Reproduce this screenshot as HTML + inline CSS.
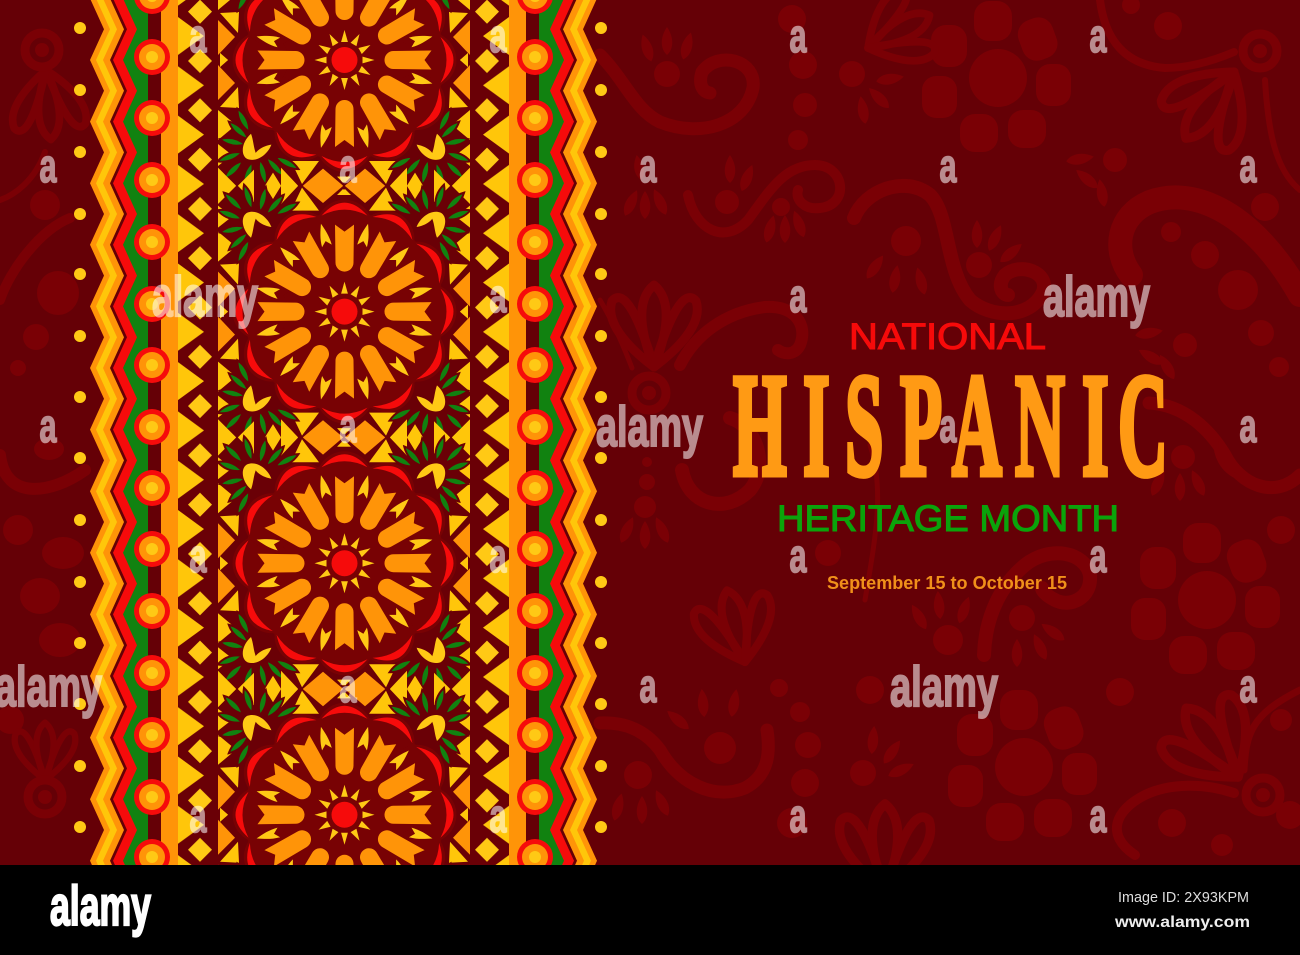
<!DOCTYPE html>
<html lang="en">
<head>
<meta charset="utf-8">
<title>National Hispanic Heritage Month</title>
<style>
html,body{margin:0;padding:0;background:#000;width:1300px;height:955px;overflow:hidden}
svg{display:block}
text{font-family:"Liberation Sans",sans-serif}
.wm text{font-weight:700;font-size:47px;fill:#fff;stroke:#fff;stroke-width:1.6}
.wm .b{font-size:57px;stroke-width:2}
</style>
</head>
<body>
<svg xmlns="http://www.w3.org/2000/svg" width="1300" height="955" viewBox="0 0 1300 955">
<defs>
<path id="z" d="M0,-1.6L14,29.2L0,60L14,90.8L0,121.6L14,152.4L0,183.2L14,214L0,244.8L14,275.6L0,306.4L14,337.2L0,368L14,398.8L0,429.6L14,460.4L0,491.2L14,522L0,552.8L14,583.6L0,614.4L14,645.2L0,676L14,706.8L0,737.6L14,768.4L0,799.2L14,830L0,860.8L14,891.6L100,891.6L100,-1.6Z"/>
<g id="ci"><circle r="18" fill="#f60b0b"/><circle r="13" fill="#ff9408"/><circle r="6" fill="#ffc915"/></g>
<pattern id="col" width="40" height="49.3" patternUnits="userSpaceOnUse" patternTransform="translate(178,17)">
<rect width="40" height="49.3" fill="#6a0006"/>
<path d="M0,0L26,19L0,38Z" fill="#ffc60a"/>
<path d="M22,32L34,44L22,56L10,44Z M22,-17.3L34,-5.3L22,6.7L10,-5.3Z" fill="#ffc915"/>
</pattern>
<g id="side">
<use href="#z" x="90" fill="#ff9408"/>
<use href="#z" x="96" fill="#ffc60a"/>
<use href="#z" x="103" fill="#ff9408"/>
<use href="#z" x="110" fill="#650006"/>
<use href="#z" x="113" fill="#f60b0b"/>
<use href="#z" x="123" fill="#118210"/>
<rect x="148" y="0" width="14" height="865" fill="#650006"/>
<rect x="161" y="0" width="18" height="865" fill="#ff9408"/>
<rect x="178" y="0" width="40" height="865" fill="url(#col)"/>
<use href="#ci" x="152" y="-4"/><use href="#ci" x="152" y="57"/><use href="#ci" x="152" y="118"/><use href="#ci" x="152" y="180"/><use href="#ci" x="152" y="242"/><use href="#ci" x="152" y="304"/><use href="#ci" x="152" y="365"/><use href="#ci" x="152" y="427"/><use href="#ci" x="152" y="488"/><use href="#ci" x="152" y="549"/><use href="#ci" x="152" y="611"/><use href="#ci" x="152" y="673"/><use href="#ci" x="152" y="735"/><use href="#ci" x="152" y="797"/><use href="#ci" x="152" y="857"/>
</g>
<g id="dots" fill="#ffc915"><circle cy="28" r="6"/><circle cy="90" r="6"/><circle cy="152" r="6"/><circle cy="214" r="6"/><circle cy="274" r="6"/><circle cy="336" r="6"/><circle cy="397" r="6"/><circle cy="458" r="6"/><circle cy="520" r="6"/><circle cy="582" r="6"/><circle cy="643" r="6"/><circle cy="704" r="6"/><circle cy="766" r="6"/><circle cy="827" r="6"/></g>
<path id="l" d="M0,-13Q7,0 0,13Q-7,0 0,-13Z" fill="#118210" stroke="#6a0006" stroke-width="2"/>
<g id="q">
<path d="M218,5L235,23L218,40Z M303,126L323,109L343,126L323,143Z" fill="#ff9408"/>
<path d="M220,-7L228,0L220,7Z M220,47L238,27L239,48Z M218,50L236,65L218,80Z M218,84L232,95L218,106Z M218,108L236,126L218,144Z M238,126L254,110L254,142Z M265,126L273,113L281,126L273,139Z M281,108L298,126L281,144Z M291,101L319,101L302,124Z M338,135L345,129L351,135Z" fill="#ffc60a"/>
<circle cx="257" cy="87" r="18" fill="#6a0006"/>
<use href="#l" transform="translate(257,87) rotate(-27) translate(0,-30)"/>
<use href="#l" transform="translate(257,87) rotate(-48) translate(0,-25)"/>
<use href="#l" transform="translate(257,87) rotate(-78) translate(0,-25)"/>
<use href="#l" transform="translate(257,87) rotate(-110) translate(0,-29)"/>
<use href="#l" transform="translate(257,87) rotate(-134) translate(0,-33)"/>
<use href="#l" transform="translate(257,87) rotate(-162) translate(0,-29)"/>
<use href="#l" transform="translate(257,87) rotate(167) translate(0,-26)"/>
<use href="#l" transform="translate(257,87) rotate(138) translate(0,-27)"/>
<use href="#l" transform="translate(257,87) rotate(118) translate(0,-34)"/>
<path transform="translate(257,87) scale(1.2)" d="M-5,-11C-13,-4 -14,7 -8,10C0,13 9,6 12,-2C5,-1 0,3 -1,5C-3,0 -3,-6 -5,-11Z" fill="#ffc915"/>
</g>
<g id="q4">
<use href="#q"/>
<use href="#q" transform="translate(688,0) scale(-1,1)"/>
<use href="#q" transform="scale(1,-1)"/>
<use href="#q" transform="translate(688,0) scale(-1,-1)"/>
</g>
<path id="pe" d="M-9,-49A9,9 0 0 0 9,-49L9.5,-87L0,-80L-9.5,-87Z" fill="#ff9408"/>
<path id="sp" d="M0,-91C2.500,-84 5,-77 5,-68L0,-73L-5,-68C-5,-77 -2.500,-84 0,-91Z" fill="#ffc915"/>
<path id="ray" d="M0,-30L3.4,-18L-3.4,-18Z" fill="#ffc915"/>
<path id="arc" d="M-23,-96Q0,-122 23,-96Q0,-108 -23,-96Z" fill="#f60b0b"/>
<g id="m">
<circle r="100" fill="#780204"/>
<g fill="#780204"><circle cx="0" cy="-84" r="28"/><circle cx="42" cy="-72.7" r="28"/><circle cx="72.7" cy="-42" r="28"/><circle cx="84" cy="0" r="28"/><circle cx="72.7" cy="42" r="28"/><circle cx="42" cy="72.7" r="28"/><circle cx="0" cy="84" r="28"/><circle cx="-42" cy="72.7" r="28"/><circle cx="-72.7" cy="42" r="28"/><circle cx="-84" cy="0" r="28"/><circle cx="-72.7" cy="-42" r="28"/><circle cx="-42" cy="-72.7" r="28"/></g>
<use href="#arc"/><use href="#arc" transform="rotate(30)"/><use href="#arc" transform="rotate(60)"/><use href="#arc" transform="rotate(90)"/><use href="#arc" transform="rotate(120)"/><use href="#arc" transform="rotate(150)"/><use href="#arc" transform="rotate(180)"/><use href="#arc" transform="rotate(210)"/><use href="#arc" transform="rotate(240)"/><use href="#arc" transform="rotate(270)"/><use href="#arc" transform="rotate(300)"/><use href="#arc" transform="rotate(330)"/>
<use href="#pe"/><use href="#pe" transform="rotate(30)"/><use href="#pe" transform="rotate(60)"/><use href="#pe" transform="rotate(90)"/><use href="#pe" transform="rotate(120)"/><use href="#pe" transform="rotate(150)"/><use href="#pe" transform="rotate(180)"/><use href="#pe" transform="rotate(210)"/><use href="#pe" transform="rotate(240)"/><use href="#pe" transform="rotate(270)"/><use href="#pe" transform="rotate(300)"/><use href="#pe" transform="rotate(330)"/>
<use href="#sp" transform="rotate(15)"/><use href="#sp" transform="rotate(45)"/><use href="#sp" transform="rotate(75)"/><use href="#sp" transform="rotate(105)"/><use href="#sp" transform="rotate(135)"/><use href="#sp" transform="rotate(165)"/><use href="#sp" transform="rotate(195)"/><use href="#sp" transform="rotate(225)"/><use href="#sp" transform="rotate(255)"/><use href="#sp" transform="rotate(285)"/><use href="#sp" transform="rotate(315)"/><use href="#sp" transform="rotate(345)"/>
<use href="#ray"/><use href="#ray" transform="rotate(30)"/><use href="#ray" transform="rotate(60)"/><use href="#ray" transform="rotate(90)"/><use href="#ray" transform="rotate(120)"/><use href="#ray" transform="rotate(150)"/><use href="#ray" transform="rotate(180)"/><use href="#ray" transform="rotate(210)"/><use href="#ray" transform="rotate(240)"/><use href="#ray" transform="rotate(270)"/><use href="#ray" transform="rotate(300)"/><use href="#ray" transform="rotate(330)"/>
<circle r="13" fill="#f60b0b"/>
</g>
<g id="sh" fill="none" stroke="#7a0005" stroke-width="9" stroke-linejoin="round">
<path d="M0,0C-20,-15 -50,-42 -42,-66C-30,-80 -15,-50 0,0Z"/>
<path d="M0,0C-12,-30 -20,-66 0,-82C20,-66 12,-30 0,0Z"/>
<path d="M0,0C20,-15 50,-42 42,-66C30,-80 15,-50 0,0Z"/>
</g>
<g id="ey"><circle r="17" fill="none" stroke="#7a0005" stroke-width="9"/><circle r="7" fill="#7a0005"/></g>
<path id="fi" d="M0,-14C7,-4 7,8 0,14C-7,8 -7,-4 0,-14Z" fill="#7a0005"/>
<g id="fl" fill="#7a0005">
<circle r="29"/>
<rect x="-24" y="-77" width="38" height="40" rx="15"/><rect x="22" y="-60" width="36" height="42" rx="15" transform="rotate(-20 40 -38)"/><rect x="38" y="-14" width="35" height="42" rx="14"/><rect x="10" y="32" width="38" height="38" rx="15"/><rect x="-38" y="36" width="38" height="38" rx="15"/><rect x="-76" y="-2" width="35" height="42" rx="14"/><rect x="-67" y="-53" width="36" height="42" rx="15"/>
</g>
</defs>

<rect width="1300" height="865" fill="#650006"/>

<!-- background motifs -->
<g fill="#7a0005">
<use href="#fl" x="998" y="78"/>
<use href="#fl" x="1024" y="767"/>
<use href="#fl" x="1207" y="600"/>
<circle cx="792" cy="19" r="14"/><circle cx="803" cy="65" r="14"/><circle cx="805" cy="105" r="12"/><circle cx="798" cy="140" r="10"/>
<circle cx="667" cy="74" r="13"/><use href="#fi" x="647" y="48" transform="rotate(-18 647 48)"/><use href="#fi" x="667" y="41"/><use href="#fi" x="687" y="46" transform="rotate(16 687 46)"/>
<circle cx="852" cy="74" r="13"/><use href="#fi" x="890" y="79" transform="rotate(80 890 79)"/><use href="#fi" x="879" y="98" transform="rotate(-45 879 98)"/><use href="#fi" x="863" y="110" transform="rotate(-10 863 110)"/>
<circle cx="727" cy="202" r="12"/><use href="#fi" x="712" y="172" transform="rotate(-10 712 172) scale(.9)"/><use href="#fi" x="730" y="169"/><use href="#fi" x="747" y="178" transform="rotate(22 747 178)"/>
<circle cx="781" cy="207" r="9"/><use href="#fi" x="770" y="229" transform="rotate(15 770 229)"/><use href="#fi" x="785" y="229"/><use href="#fi" x="799" y="224" transform="rotate(-20 799 224)"/>
<use href="#fi" x="631" y="203" transform="rotate(25 631 203)"/><use href="#fi" x="645" y="205"/><use href="#fi" x="660" y="202" transform="rotate(-25 660 202)"/>
<circle cx="906" cy="241" r="15"/><use href="#fi" x="875" y="267" transform="rotate(35 875 267)"/><use href="#fi" x="895" y="279" transform="rotate(10 895 279)"/><use href="#fi" x="921" y="281" transform="rotate(-15 921 281)"/>
<circle cx="979" cy="265" r="13"/><use href="#fi" x="977" y="234"/><use href="#fi" x="995" y="238" transform="rotate(25 995 238)"/><use href="#fi" x="1011" y="253" transform="rotate(50 1011 253)"/>
<circle cx="1115" cy="160" r="12"/><use href="#fi" x="1080" y="159" transform="rotate(80 1080 159)"/><use href="#fi" x="1087" y="179" transform="rotate(-50 1087 179)"/><use href="#fi" x="1102" y="193" transform="rotate(-10 1102 193)"/>
<circle cx="1168" cy="26" r="14"/><circle cx="1131" cy="5" r="9"/>
<circle cx="1265" cy="207" r="14"/><circle cx="1171" cy="232" r="10"/><circle cx="1205" cy="255" r="14"/><circle cx="1238" cy="290" r="20"/><circle cx="1261" cy="333" r="13"/><circle cx="1279" cy="367" r="10"/>
<circle cx="1185" cy="345" r="12"/><use href="#fi" x="1149" y="333" transform="rotate(80 1149 333)"/><use href="#fi" x="1151" y="357" transform="rotate(-60 1151 357)"/><use href="#fi" x="1167" y="367" transform="rotate(-30 1167 367)"/>
<circle cx="1183" cy="457" r="12"/><use href="#fi" x="1158" y="483" transform="rotate(25 1158 483)"/><use href="#fi" x="1180" y="487"/><use href="#fi" x="1198" y="483" transform="rotate(-25 1198 483)"/>
<circle cx="948" cy="640" r="15"/><use href="#fi" x="919" y="617" transform="rotate(-30 919 617)"/><use href="#fi" x="939" y="605" transform="rotate(-5 939 605)"/><use href="#fi" x="964" y="610" transform="rotate(20 964 610)"/>
<circle cx="1022" cy="618" r="13"/><use href="#fi" x="1017" y="653"/><use href="#fi" x="1040" y="647" transform="rotate(-25 1040 647)"/><use href="#fi" x="1053" y="632" transform="rotate(-55 1053 632)"/>
<circle cx="645" cy="507" r="11"/><use href="#fi" x="627" y="530" transform="rotate(25 627 530)"/><use href="#fi" x="645" y="535"/><use href="#fi" x="662" y="530" transform="rotate(-25 662 530)"/>
<circle cx="647" cy="482" r="8"/><circle cx="647" cy="462" r="5"/><circle cx="828" cy="553" r="13"/><circle cx="1281" cy="530" r="14"/>
<circle cx="720" cy="748" r="16"/><use href="#fi" x="678" y="720" transform="rotate(-50 678 720)"/><use href="#fi" x="703" y="703" transform="rotate(-5 703 703)"/><use href="#fi" x="734" y="703" transform="rotate(10 734 703)"/>
<circle cx="638" cy="775" r="14"/><use href="#fi" x="618" y="807" transform="rotate(15 618 807)"/><use href="#fi" x="642" y="810"/><use href="#fi" x="662" y="803" transform="rotate(-25 662 803)"/>
<circle cx="779" cy="688" r="9"/><circle cx="800" cy="712" r="10"/><circle cx="808" cy="745" r="13"/><circle cx="805" cy="783" r="14"/><circle cx="792" cy="823" r="15"/>
<circle cx="863" cy="773" r="13"/><use href="#fi" x="873" y="740" transform="rotate(5 873 740)"/><use href="#fi" x="892" y="752" transform="rotate(35 892 752)"/><use href="#fi" x="901" y="770" transform="rotate(65 901 770)"/>
<circle cx="870" cy="690" r="14"/><circle cx="1120" cy="692" r="14"/><circle cx="1172" cy="823" r="14"/><circle cx="1222" cy="845" r="11"/>
<circle cx="1281" cy="720" r="11"/><circle cx="1290" cy="815" r="14"/>
<!-- left edge -->
<circle cx="45" cy="205" r="15"/><ellipse cx="58" cy="293" rx="21" ry="22"/><circle cx="36" cy="337" r="13"/><circle cx="18" cy="368" r="8"/><ellipse cx="49" cy="449" rx="15" ry="11"/><circle cx="18" cy="530" r="15"/><ellipse cx="63" cy="553" rx="21" ry="16"/><ellipse cx="40" cy="596" rx="20" ry="18"/><ellipse cx="60" cy="640" rx="21" ry="17"/><circle cx="10" cy="720" r="14"/>
</g>
<g fill="none" stroke="#7a0005" stroke-linecap="round" stroke-linejoin="round">
<path d="M600,55C625,80 635,110 660,122C700,138 745,125 753,88C757,60 718,50 702,72C698,85 703,92 710,93" stroke-width="13"/>
<path d="M1100,0C1105,40 1125,65 1165,68C1190,68 1215,60 1234,52" stroke-width="8"/>
<path d="M688,195C695,230 725,245 748,220C770,190 785,165 815,165C845,165 850,205 820,208C805,210 795,200 798,190" stroke-width="10"/>
<path d="M854,218C865,190 905,175 930,195C950,215 945,270 970,300C990,318 1030,320 1043,292C1050,272 1020,262 1005,275C997,285 1002,295 1008,295" stroke-width="14"/>
<path d="M1265,80C1268,130 1275,170 1300,190" stroke-width="6"/>
<path d="M1131,275C1112,250 1118,215 1150,202C1195,185 1255,215 1300,295" stroke-width="24"/>
<path d="M680,365C695,335 725,312 765,307C795,305 808,325 800,345C795,355 785,355 778,350" stroke-width="12"/>
<path d="M600,300C615,325 625,350 632,368" stroke-width="5"/>
<path d="M682,470C688,505 725,515 750,490C770,465 755,425 730,418" stroke-width="14"/>
<path d="M1149,403C1185,405 1210,430 1225,455C1240,485 1275,500 1300,475" stroke-width="13"/>
<path d="M1216,440C1215,455 1222,470 1238,477" stroke-width="5"/>
<path d="M984,655C985,625 995,590 1025,565C1050,545 1085,552 1090,575C1092,598 1070,608 1055,600C1045,595 1042,590 1042,588" stroke-width="14"/>
<path d="M600,723C625,722 645,730 660,750C680,785 715,800 745,788C770,775 770,750 767,730" stroke-width="13"/>
<path d="M1234,793C1205,783 1170,783 1145,795C1115,810 1105,835 1135,855" stroke-width="10"/>
<path d="M1244,770C1246,735 1250,715 1300,690" stroke-width="7"/>
<path d="M870,445C885,490 875,540 865,600" stroke-width="5"/>
<path d="M0,200C15,195 35,180 45,152" stroke-width="6"/>
<path d="M0,300C10,270 40,230 70,218" stroke-width="10"/>
<path d="M0,455C5,500 50,495 85,470" stroke-width="12"/>
</g>
<use href="#sh" transform="translate(868,48) rotate(62) scale(.85)"/>
<use href="#sh" transform="translate(1234,72) rotate(-144)"/>
<use href="#sh" transform="translate(654,367)"/>
<use href="#sh" transform="translate(745,662) rotate(-14) scale(.9)"/>
<use href="#sh" transform="translate(1238,777) rotate(-37) scale(1.05)"/>
<use href="#sh" transform="translate(885,890) scale(1.05)"/>
<use href="#sh" transform="translate(46,70) rotate(176) scale(.85)"/>
<use href="#sh" transform="translate(45,780) scale(.7)"/>
<use href="#ey" x="1260" y="51"/>
<use href="#ey" x="649" y="393"/>
<use href="#ey" x="1263" y="795"/>
<use href="#ey" x="42" y="50"/>
<use href="#ey" x="45" y="797"/>

<!-- decorative strip -->
<use href="#side"/>
<use href="#side" transform="translate(687,0) scale(-1,1)"/>
<use href="#dots" x="80"/>
<use href="#dots" x="601"/>
<rect x="218" y="0" width="251" height="865" fill="#6a0006"/>
<use href="#q4" y="60"/>
<use href="#q4" y="311.6"/>
<use href="#q4" y="563.2"/>
<use href="#q4" y="814.8"/>
<use href="#m" x="344.500" y="60"/>
<use href="#m" x="344.500" y="311.6"/>
<use href="#m" x="344.500" y="563.2"/>
<use href="#m" x="344.500" y="814.8"/>

<!-- headline -->
<text x="849" y="349" font-size="37" fill="#f60a0a" stroke="#f60a0a" stroke-width="1.1" textLength="197" lengthAdjust="spacingAndGlyphs">NATIONAL</text>
<text transform="scale(.47,1)" x="1559.6 1708.5 1797.9 1914.9 2025.5 2159.6 2302 2378.7" y="474.500" font-size="147" font-weight="700" fill="#ff9a14" stroke="#ff9a14" stroke-width="6" style="font-family:'Liberation Serif',serif">HISPANIC</text>
<text x="777" y="531" font-size="37" fill="#0ba30b" stroke="#0ba30b" stroke-width="1.1" textLength="342" lengthAdjust="spacingAndGlyphs">HERITAGE MONTH</text>
<text x="827" y="589" font-size="18" font-weight="700" fill="#f0901a" textLength="240" lengthAdjust="spacingAndGlyphs">September 15 to October 15</text>

<!-- watermarks -->
<g class="wm" opacity=".55">
<text class="b" x="152" y="316" textLength="106" lengthAdjust="spacingAndGlyphs">alamy</text>
<text class="b" x="1043" y="316" textLength="107" lengthAdjust="spacingAndGlyphs">alamy</text>
<text class="b" x="596" y="446" textLength="107" lengthAdjust="spacingAndGlyphs">alamy</text>
<text class="b" x="-5" y="706" textLength="107" lengthAdjust="spacingAndGlyphs">alamy</text>
<text class="b" x="890" y="706" textLength="108" lengthAdjust="spacingAndGlyphs">alamy</text>
<text x="189.500" y="52" textLength="17" lengthAdjust="spacingAndGlyphs">a</text>
<text x="489.500" y="52" textLength="17" lengthAdjust="spacingAndGlyphs">a</text>
<text x="789.500" y="52" textLength="17" lengthAdjust="spacingAndGlyphs">a</text>
<text x="1089.500" y="52" textLength="17" lengthAdjust="spacingAndGlyphs">a</text>
<text x="39.500" y="182" textLength="17" lengthAdjust="spacingAndGlyphs">a</text>
<text x="339.500" y="182" textLength="17" lengthAdjust="spacingAndGlyphs">a</text>
<text x="639.500" y="182" textLength="17" lengthAdjust="spacingAndGlyphs">a</text>
<text x="939.500" y="182" textLength="17" lengthAdjust="spacingAndGlyphs">a</text>
<text x="1239.500" y="182" textLength="17" lengthAdjust="spacingAndGlyphs">a</text>
<text x="489.500" y="312" textLength="17" lengthAdjust="spacingAndGlyphs">a</text>
<text x="789.500" y="312" textLength="17" lengthAdjust="spacingAndGlyphs">a</text>
<text x="39.500" y="442" textLength="17" lengthAdjust="spacingAndGlyphs">a</text>
<text x="339.500" y="442" textLength="17" lengthAdjust="spacingAndGlyphs">a</text>
<text x="939.500" y="442" textLength="17" lengthAdjust="spacingAndGlyphs">a</text>
<text x="1239.500" y="442" textLength="17" lengthAdjust="spacingAndGlyphs">a</text>
<text x="189.500" y="572" textLength="17" lengthAdjust="spacingAndGlyphs">a</text>
<text x="489.500" y="572" textLength="17" lengthAdjust="spacingAndGlyphs">a</text>
<text x="789.500" y="572" textLength="17" lengthAdjust="spacingAndGlyphs">a</text>
<text x="1089.500" y="572" textLength="17" lengthAdjust="spacingAndGlyphs">a</text>
<text x="339.500" y="702" textLength="17" lengthAdjust="spacingAndGlyphs">a</text>
<text x="639.500" y="702" textLength="17" lengthAdjust="spacingAndGlyphs">a</text>
<text x="1239.500" y="702" textLength="17" lengthAdjust="spacingAndGlyphs">a</text>
<text x="189.500" y="832" textLength="17" lengthAdjust="spacingAndGlyphs">a</text>
<text x="489.500" y="832" textLength="17" lengthAdjust="spacingAndGlyphs">a</text>
<text x="789.500" y="832" textLength="17" lengthAdjust="spacingAndGlyphs">a</text>
<text x="1089.500" y="832" textLength="17" lengthAdjust="spacingAndGlyphs">a</text>
</g>

<!-- footer -->
<rect x="0" y="865" width="1300" height="90" fill="#000"/>
<text x="50" y="925" font-size="56" font-weight="700" fill="#fff" stroke="#fff" stroke-width="2.2" textLength="101" lengthAdjust="spacingAndGlyphs">alamy</text>
<text x="1118" y="902" font-size="15" fill="#dedede" textLength="131" lengthAdjust="spacingAndGlyphs">Image ID: 2X93KPM</text>
<text x="1115" y="927" font-size="16" font-weight="700" fill="#eee" textLength="135" lengthAdjust="spacingAndGlyphs">www.alamy.com</text>
</svg>
</body>
</html>
